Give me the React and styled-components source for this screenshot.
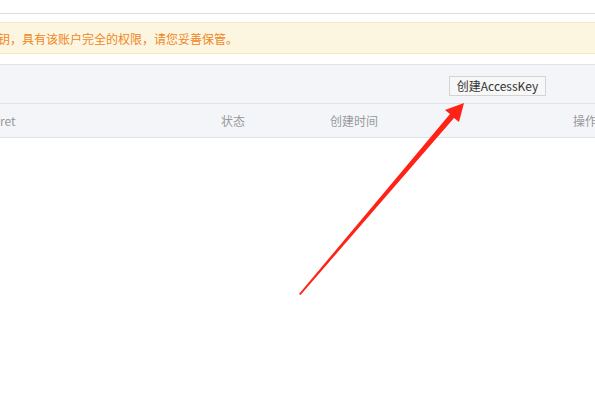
import styled, { createGlobalStyle } from "styled-components";

const Global = createGlobalStyle`
  html, body {
    margin: 0;
    padding: 0;
    background: #fff;
    overflow: hidden;
  }
  body {
    font-family: "Noto Sans CJK SC", "Noto Sans", sans-serif;
    font-size: 12px;
  }
`

const Page = styled.div`
  position: relative;
  width: 595px;
  height: 407px;
  overflow: hidden;
  background: #fff;
`

const TopBar = styled.div`
  height: 13px;
  border-bottom: 1px solid #dcdcdc;
`

const Notice = styled.div`
  margin-top: 8px;
  height: 30px;
  display: flex;
  align-items: center;
  background: #fcf6e1;
  border-top: 1px solid #f6e7bf;
  border-bottom: 1px solid #f6e7bf;
  color: #f0861f;
  font-size: 12px;
  white-space: nowrap;
`

const NoticeText = styled.span`
  margin-left: -2px;
`

const Toolbar = styled.div`
  margin-top: 10px;
  height: 27px;
  padding: 11px 49px 0 0;
  display: flex;
  align-items: flex-start;
  justify-content: flex-end;
  background: #f4f5f9;
  border-top: 1px solid #dfe2e8;
`

const Button = styled.button`
  height: 20px;
  width: 97px;
  padding: 0;
  border: 1px solid #d4d4d4;
  background: #f7f7f7;
  color: #333;
  font-family: "Noto Sans CJK SC", "Noto Sans", sans-serif;
  font-size: 12px;
  line-height: 18px;
  cursor: pointer;
`

const HeaderRow = styled.div`
  height: 33px;
  display: grid;
  grid-template-columns: 221px 109px 243px 1fr;
  align-items: center;
  background: #f4f5f9;
  border-top: 1px solid #dfe2e8;
  border-bottom: 1px solid #dfe2e8;
  color: #999;
  white-space: nowrap;
`

const Cell = styled.div`
  font-size: 12px;
`

const Arrow = styled.svg`
  position: absolute;
  left: 0;
  top: 0;
  pointer-events: none;
`

export default function App() {
  return (
    <Page>
      <Global />
      <TopBar />
      <Notice>
        <NoticeText>钥，具有该账户完全的权限，请您妥善保管。</NoticeText>
      </Notice>
      <Toolbar>
        <Button>创建AccessKey</Button>
      </Toolbar>
      <HeaderRow>
        <Cell>ret</Cell>
        <Cell>状态</Cell>
        <Cell>创建时间</Cell>
        <Cell>操作</Cell>
      </HeaderRow>
      <Arrow width="595" height="407" viewBox="0 0 595 407">
        <polygon
          points="299,294 450,114 445,110 464,103 459,122 454,118 300.5,295"
          fill="#ff2216"
        />
      </Arrow>
    </Page>
  )
}
